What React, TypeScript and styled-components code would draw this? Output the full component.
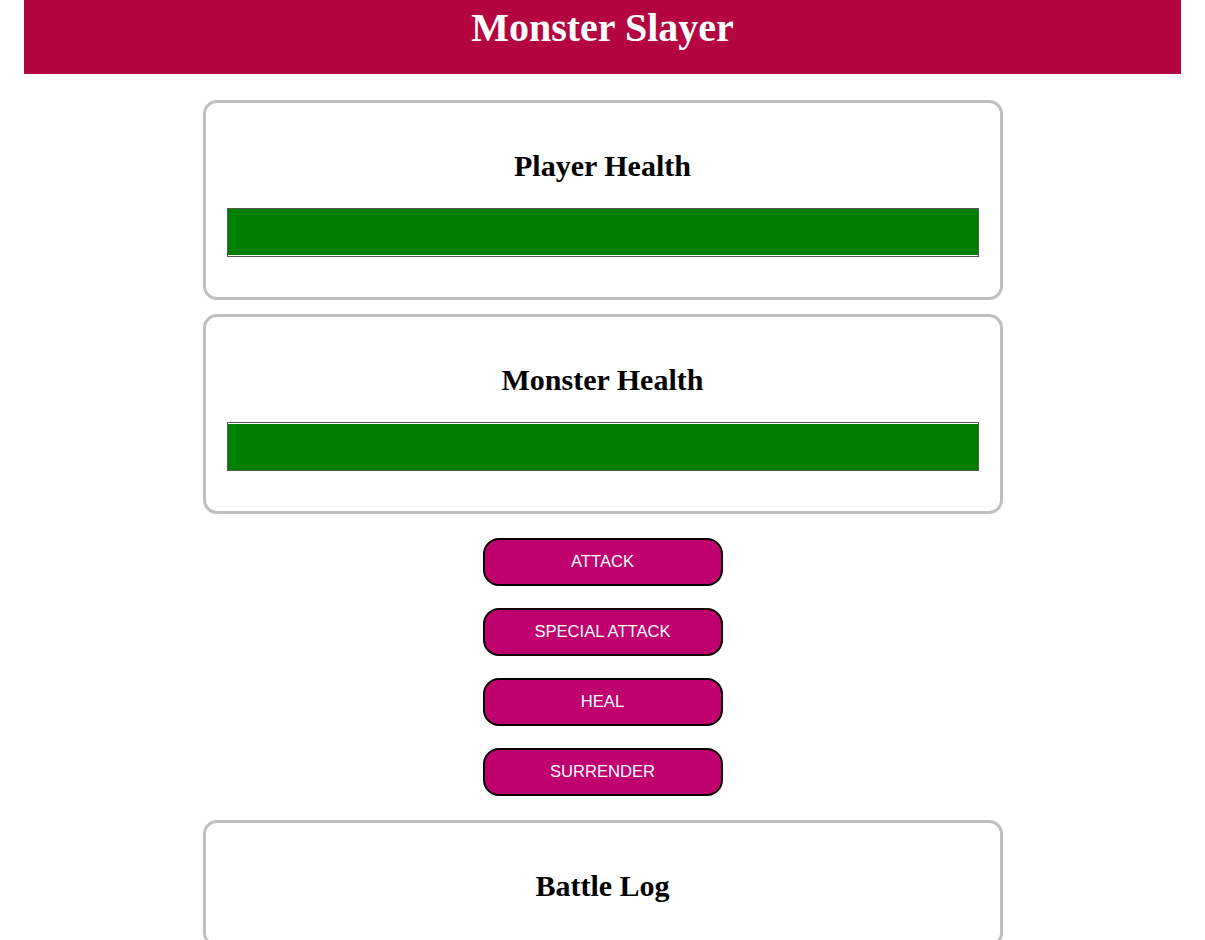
import React from "react";
import styled, { createGlobalStyle } from "styled-components";

const GlobalStyle = createGlobalStyle`
  * {
    box-sizing: border-box;
  }
  html,
  body {
    margin: 0;
    padding: 0;
    background: #ffffff;
    font-family: "Liberation Serif", "Times New Roman", serif;
  }
`;

const actions = ["Attack", "Special Attack", "Heal", "Surrender"];

const App: React.FC = () => {
  return (
    <>
      <GlobalStyle />
      <Header>
        <Title>Monster Slayer</Title>
      </Header>
      <Main>
        <Card>
          <CardTitle>Player Health</CardTitle>
          <HealthBar $gap="bottom">
            <HealthValue style={{ width: "100%" }} />
          </HealthBar>
        </Card>
        <Card>
          <CardTitle>Monster Health</CardTitle>
          <HealthBar $gap="top">
            <HealthValue style={{ width: "100%" }} />
          </HealthBar>
        </Card>
        <Controls>
          {actions.map((label) => (
            <ActionButton key={label}>{label}</ActionButton>
          ))}
        </Controls>
        <Card>
          <CardTitle>Battle Log</CardTitle>
        </Card>
      </Main>
    </>
  );
};
export default App;

const Header = styled.header`
  width: 96%;
  margin: 0 auto;
  padding: 5px 0 23px;
  background-color: #b50540;
  text-align: center;
`;

const Title = styled.h1`
  margin: 0;
  font-family: "Liberation Serif", "Times New Roman", serif;
  font-size: 40px;
  font-weight: 700;
  line-height: 46px;
  color: #ffffff;
`;

const Main = styled.main`
  display: flex;
  flex-direction: column;
  align-items: center;
  padding-top: 26px;
`;

const Card = styled.section`
  width: 800px;
  padding: 45px 21px 40px;
  border: 3px solid #bfbfbf;
  border-radius: 14px;
  background: #ffffff;
  & + & {
    margin-top: 14px;
  }
`;

const CardTitle = styled.h2`
  margin: 0;
  font-family: "Liberation Serif", "Times New Roman", serif;
  font-size: 30px;
  font-weight: 700;
  line-height: 36px;
  text-align: center;
  color: #000000;
  & + div {
    margin-top: 24px;
  }
`;

const HealthBar = styled.div<{ $gap: "top" | "bottom" }>`
  display: flex;
  align-items: ${(p) => (p.$gap === "top" ? "flex-end" : "flex-start")};
  width: 100%;
  height: 49px;
  border: 1px solid #575757;
  background: #ffffff;
`;

const HealthValue = styled.div`
  height: calc(100% - 1px);
  background-color: #008000;
`;

const Controls = styled.div`
  display: flex;
  flex-direction: column;
  align-items: center;
  gap: 22px;
  margin: 24px 0;
`;

const ActionButton = styled.button`
  width: 240px;
  height: 48px;
  padding: 0;
  border: 2px solid #000000;
  border-radius: 16px;
  background-color: #c1006f;
  color: #ffffff;
  font-family: "Liberation Sans", Arial, sans-serif;
  font-size: 16.6px;
  text-transform: uppercase;
  cursor: pointer;
`;
